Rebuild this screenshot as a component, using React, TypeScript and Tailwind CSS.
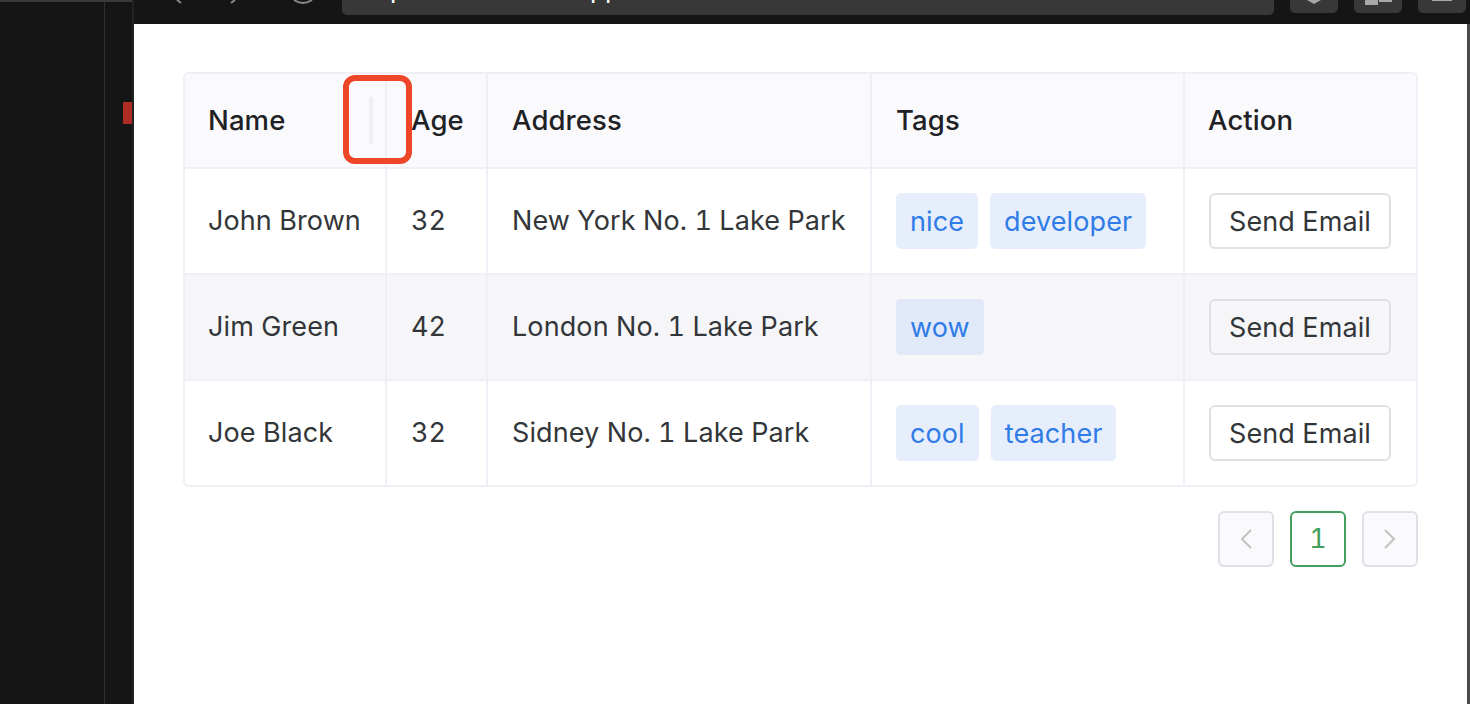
const rows = [
  { name: 'John Brown', age: 32, address: 'New York No. 1 Lake Park', tags: ['nice', 'developer'] },
  { name: 'Jim Green', age: 42, address: 'London No. 1 Lake Park', tags: ['wow'] },
  { name: 'Joe Black', age: 32, address: 'Sidney No. 1 Lake Park', tags: ['cool', 'teacher'] },
];

const headers = ['Name', 'Age', 'Address', 'Tags', 'Action'];

const Chevron = ({ left }: { left?: boolean }) => (
  <svg width="14" height="22" viewBox="0 0 14 22" fill="none" stroke="#c2c2c2" strokeWidth="2">
    <path d={left ? 'M12 2 L3 11 L12 20' : 'M2 2 L11 11 L2 20'} />
  </svg>
);

const TopBar = () => (
  <div className="h-6 flex bg-[#151515] overflow-hidden relative">
    <svg className="absolute left-[30px] top-0" width="190" height="8" fill="none" stroke="#8a8a8a" strokeWidth="2">
      <path d="M13 0 L17 3" />
      <path d="M71 0 L67 3" />
      <path d="M130 0 Q139 6 148 0" />
    </svg>
    <div className="ml-[208px] w-[932px] h-[15px] bg-[#383838] rounded-b-[5px] flex items-end overflow-hidden pl-[48px] text-[26px] leading-[32px] text-white shrink-0">
      <span className="-translate-y-[10px]">p</span>
      <span className="ml-[184px] -translate-y-[10px] tracking-[-1px]">pp</span>
    </div>
    <div className="ml-4 w-12 h-[13px] bg-[#383838] rounded-b-[5px] flex justify-center shrink-0">
      <div className="w-[14px] h-[4px] bg-[#a8a8a8] [clip-path:polygon(0_0,100%_0,50%_100%)]" />
    </div>
    <div className="ml-4 w-12 h-[13px] bg-[#383838] rounded-b-[5px] flex justify-center gap-px shrink-0">
      <div className="w-[13px] h-[5px] bg-[#a8a8a8]" />
      <div className="w-[13px] h-[2px] bg-[#a8a8a8]" />
    </div>
    <div className="ml-4 w-12 h-[13px] bg-[#383838] rounded-b-[5px] flex justify-center shrink-0">
      <div className="w-5 h-px bg-[#a8a8a8]" />
    </div>
  </div>
);

const Tag = ({ label, dark }: { label: string; dark: boolean }) => (
  <span className={`h-14 px-[14px] pt-[2px] flex items-center rounded-[5px] text-[#2f7ce8] ${dark ? 'bg-[#e1e8f8]' : 'bg-[#e7eefb]'}`}>
    {label}
  </span>
);

const PageButton = ({ children, active }: { children: React.ReactNode; active?: boolean }) => (
  <div
    className={`w-14 h-14 rounded-[6px] border-2 flex items-center justify-center ${
      active ? 'border-[#449e5e] text-[#449e5e] bg-white' : 'border-[#e0e0e6] bg-[#fafafc]'
    }`}
  >
    {children}
  </div>
);

export default function App() {
  return (
    <div className="w-[1470px] h-[704px] flex overflow-hidden bg-[#151515] font-['Inter',sans-serif] text-[27px] tracking-[0.1px] tabular-nums text-[#333639]">
      <div className="w-[134px] shrink-0 flex flex-col border-r-2 border-[#222222] relative">
        <div className="h-0.5 bg-[#3a3a3a]" />
        <div className="flex-1 w-[105px] border-r border-[#2e2e2e]" />
        <div className="absolute left-[123px] top-[102px] w-[9px] h-[22px] bg-[#ad2c24]" />
      </div>
      <div className="flex-1 flex flex-col min-w-0">
        <TopBar />
        <div className="flex-1 flex">
          <div className="flex-1 bg-white px-[49px] pt-[48px] relative">
            <div className="w-[1235px] border-2 border-[#efeff5] rounded-[6px] overflow-hidden">
              <table className="w-full table-fixed border-separate border-spacing-0">
                <colgroup>
                  <col className="w-[202px]" />
                  <col className="w-[101px]" />
                  <col className="w-[384px]" />
                  <col className="w-[313px]" />
                  <col />
                </colgroup>
                <thead>
                  <tr className="h-[93px] bg-[#fafafc] text-[#1f2225] text-[27.5px]">
                    {headers.map((h, i) => (
                      <th
                        key={h}
                        className={`text-left font-medium pt-px ${i === 0 || i === 4 ? 'pl-[23px]' : 'pl-[24px]'} ${
                          i < 4 ? 'border-r-2 border-[#efeff5]' : ''
                        }`}
                      >
                        {h}
                      </th>
                    ))}
                  </tr>
                </thead>
                <tbody>
                  {rows.map((row, r) => {
                    const dark = r === 1;
                    return (
                      <tr key={row.name} className={`h-[106px] ${dark ? 'bg-[#f6f6f9]' : 'bg-white'}`}>
                        <td className="pl-[23px] border-t-2 border-r-2 border-[#efeff5]">{row.name}</td>
                        <td className="pl-[24px] border-t-2 border-r-2 border-[#efeff5]">{row.age}</td>
                        <td className="pl-[24px] border-t-2 border-r-2 border-[#efeff5]">{row.address}</td>
                        <td className="pl-[24px] border-t-2 border-r-2 border-[#efeff5]">
                          <div className="flex gap-3">
                            {row.tags.map((t) => (
                              <Tag key={t} label={t} dark={dark} />
                            ))}
                          </div>
                        </td>
                        <td className="pl-[24px] border-t-2 border-[#efeff5]">
                          <button
                            type="button"
                            className={`w-[182px] h-14 pt-[2px] rounded-[6px] border-2 border-[#e0e0e6] ${dark ? 'bg-[#f6f6f9]' : 'bg-white'}`}
                          >
                            Send Email
                          </button>
                        </td>
                      </tr>
                    );
                  })}
                </tbody>
              </table>
            </div>
            <div className="w-[1235px] mt-6 flex justify-end gap-4">
              <PageButton>
                <Chevron left />
              </PageButton>
              <PageButton active>1</PageButton>
              <PageButton>
                <Chevron />
              </PageButton>
            </div>
            {/* red annotation round the resize handle */}
            <div className="absolute left-[209px] top-[51px] w-[69px] h-[89px] border-[6px] border-[#ee4628] rounded-[12px]" />
            <div className="absolute left-[235px] top-[73px] w-1 h-[47px] bg-[#efeff5]" />
          </div>
          <div className="w-1 shrink-0 bg-[#4a4a4a]" />
        </div>
      </div>
    </div>
  );
}
